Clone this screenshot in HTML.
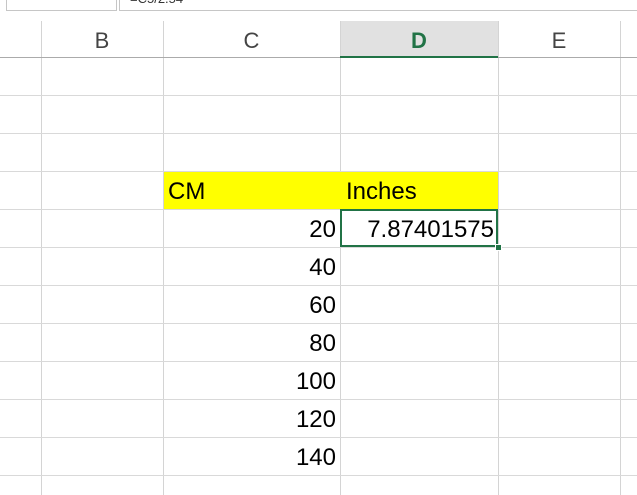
<!DOCTYPE html><html><head><style>
body{margin:0;width:637px;height:495px;overflow:hidden;background:#fff;font-family:"Liberation Sans",sans-serif;position:relative}
.a{position:absolute}
.vl{position:absolute;top:21px;bottom:0;width:1px;background:#d4d4d4}
.hl{position:absolute;left:0;right:0;height:1px;background:#d9d9d9}
.h{position:absolute;top:21px;height:36px;line-height:40px;text-align:center;font-size:22px;color:#444}
.t{position:absolute;font-size:24px;color:#000;line-height:40px}
.n{position:absolute;right:301px;font-size:24px;line-height:40px}
</style></head><body>
<div class="a" style="left:6px;top:-2px;width:109px;height:12px;border:1px solid #c6c6c6;border-top:none"></div>
<div class="a" style="left:119px;top:-2px;width:530px;height:12px;border:1px solid #c6c6c6;border-top:none"></div>
<div class="a" style="left:130px;top:-9px;font-size:13px;color:#333">=C5/2.54</div>
<div class="a" style="left:340px;top:21px;width:158px;height:36px;background:#e1e1e1"></div>
<div class="vl" style="left:41px"></div><div class="vl" style="left:163px"></div><div class="vl" style="left:340px"></div><div class="vl" style="left:498px"></div><div class="vl" style="left:620px"></div>
<div class="h" style="left:41px;width:122px">B</div>
<div class="h" style="left:163px;width:177px">C</div>
<div class="h" style="left:340px;width:158px;color:#217346;font-weight:bold">D</div>
<div class="h" style="left:498px;width:122px">E</div>
<div class="hl" style="top:57px;background:#ababab"></div>
<div class="a" style="left:340px;top:56px;width:158px;height:2px;background:#217346"></div>
<div class="hl" style="top:95px"></div><div class="hl" style="top:133px"></div><div class="hl" style="top:171px"></div><div class="hl" style="top:209px"></div><div class="hl" style="top:247px"></div><div class="hl" style="top:285px"></div><div class="hl" style="top:323px"></div><div class="hl" style="top:361px"></div><div class="hl" style="top:399px"></div><div class="hl" style="top:437px"></div><div class="hl" style="top:475px"></div>
<div class="a" style="left:164px;top:172px;width:334px;height:37px;background:#ffff00"></div>
<div class="t" style="left:168px;top:172px">CM</div>
<div class="t" style="left:346px;top:172px">Inches</div>
<div class="n" style="top:210px">20</div><div class="n" style="top:248px">40</div><div class="n" style="top:286px">60</div><div class="n" style="top:324px">80</div><div class="n" style="top:362px">100</div><div class="n" style="top:400px">120</div><div class="n" style="top:438px">140</div>
<div class="a" style="left:340px;top:209px;width:156px;height:36px;border:1px solid #217346;outline:1px solid #217346;outline-offset:-2px"></div>
<div class="t" style="right:143px;top:210px">7.87401575</div>
<div class="a" style="left:495px;top:244px;width:5px;height:5px;background:#217346;border:1px solid #fff"></div>
</body></html>
